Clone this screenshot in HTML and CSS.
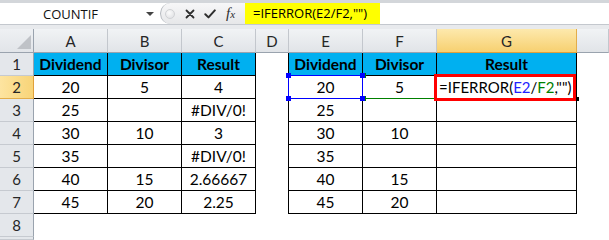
FILE: index.html
```html
<!DOCTYPE html>
<html>
<head>
<meta charset="utf-8">
<link rel="stylesheet" href="styles.css">
</head>
<body>
<div class="fbar">
  <div class="frow">
    <div class="namebox"><span class="nbtext">COUNTIF</span><span class="dd"></span></div>
    <div class="fbtns">
      <span class="knob"></span>
      <svg class="ico-x" width="10" height="10" viewBox="0 0 10 10"><path d="M1.5 1.5 L8.5 8.5 M8.5 1.5 L1.5 8.5" stroke="#2e2e2e" stroke-width="1.8" stroke-linecap="round" fill="none"/></svg>
      <svg class="ico-ok" width="12" height="10" viewBox="0 0 12 10"><path d="M1.3 5.2 L4.5 8.4 L10.8 1.4" stroke="#2e2e2e" stroke-width="2" stroke-linecap="round" stroke-linejoin="round" fill="none"/></svg>
      <span class="fx">f<span class="fxx">x</span></span>
    </div>
    <div class="finput"><span class="fy">=IFERROR(E2/F2,"")</span></div>
  </div>
</div>
<div class="sheet">
  <div class="corner"></div>
  <div class="ch">A</div><div class="ch">B</div><div class="ch">C</div><div class="ch">D</div><div class="ch">E</div><div class="ch">F</div><div class="ch on">G</div><div class="ch"></div>

  <div class="rh">1</div>
  <div class="t th">Dividend</div><div class="t th">Divisor</div><div class="t th">Result</div><div class="dr"></div>
  <div class="t th">Dividend</div><div class="t th">Divisor</div><div class="t th">Result</div><div></div>

  <div class="rh on">2</div>
  <div class="t">20</div><div class="t">5</div><div class="t">4</div><div class="dr"></div>
  <div class="t sel">20<span class="bbox"></span><span class="sq tl"></span><span class="sq tr"></span><span class="sq bl"></span><span class="sq br"></span></div>
  <div class="t sel gsel">5<span class="gsq gt"></span><span class="gsq gb"></span></div>
  <div class="t sel formula">=IFERROR(<span class="rb">E2</span>/<span class="rg">F2</span>,"")<span class="redbox"></span><span class="handle"></span></div>
  <div></div>

  <div class="rh">3</div>
  <div class="t">25</div><div class="t"></div><div class="t">#DIV/0!</div><div class="dr"></div>
  <div class="t">25</div><div class="t"></div><div class="t"></div><div></div>

  <div class="rh">4</div>
  <div class="t">30</div><div class="t">10</div><div class="t">3</div><div class="dr"></div>
  <div class="t">30</div><div class="t">10</div><div class="t"></div><div></div>

  <div class="rh">5</div>
  <div class="t">35</div><div class="t"></div><div class="t">#DIV/0!</div><div class="dr"></div>
  <div class="t">35</div><div class="t"></div><div class="t"></div><div></div>

  <div class="rh">6</div>
  <div class="t">40</div><div class="t">15</div><div class="t">2.66667</div><div class="dr"></div>
  <div class="t">40</div><div class="t">15</div><div class="t"></div><div></div>

  <div class="rh">7</div>
  <div class="t">45</div><div class="t">20</div><div class="t">2.25</div><div class="dr"></div>
  <div class="t">45</div><div class="t">20</div><div class="t"></div><div></div>

  <div class="rh">8</div>
  <div></div><div></div><div></div><div></div><div></div><div></div><div></div><div></div>

  <div class="rh"></div>
  <div></div><div></div><div></div><div></div><div></div><div></div><div></div><div></div>
</div>
</body>
</html>
```
FILE: styles.css
```css
html, body {
  margin: 0;
  padding: 0;
}
body {
  width: 609px;
  height: 240px;
  overflow: hidden;
  background: #fff;
}

/* formula bar */
.fbar {
  height: 29px;
  box-sizing: border-box;
  border-top: 3px solid #d3d6da;
  background: #e8eaed;
}
.frow {
  display: flex;
  height: 21px;
  background: #fff;
  border-bottom: 1px solid #c4c8ce;
}
.namebox {
  width: 160px;
  display: flex;
  align-items: center;
  font: 13px "Open Sans", sans-serif;
  color: #111;
}
.nbtext {
  padding-left: 43px;
}
.dd {
  margin-left: auto;
  margin-right: 6px;
  width: 0;
  height: 0;
  border-left: 4px solid transparent;
  border-right: 4px solid transparent;
  border-top: 4px solid #444;
}
.fbtns {
  width: 85px;
  box-sizing: border-box;
  display: flex;
  align-items: center;
  background: linear-gradient(#f7f7f8, #e6e7e9);
  border-left: 1px solid #b3b7bd;
  border-radius: 11px 0 0 11px;
}
.knob {
  width: 10px;
  height: 10px;
  box-sizing: border-box;
  margin-left: 4px;
  border-radius: 50%;
  border: 1px solid #d0d2d5;
  background: radial-gradient(circle at 40% 35%, #fbfbfb, #dcdde0);
}
.ico-x {
  margin-left: 10px;
}
.ico-ok {
  margin-left: 9px;
}
.fx {
  margin-left: 10px;
  font: italic 15px "Liberation Serif", serif;
  color: #2e2e2e;
  line-height: 15px;
}
.fxx {
  font-size: 11px;
}
.finput {
  flex: 1;
  display: flex;
}
.fy {
  width: 135px;
  box-sizing: border-box;
  padding-left: 8px;
  background: #ffff00;
  font: 13px "Open Sans", sans-serif;
  line-height: 21px;
  color: #000;
  white-space: nowrap;
}

/* sheet */
.sheet {
  display: grid;
  grid-template-columns: 34px 74px 74px 74px 33px 74px 74px 140px 1fr;
  grid-template-rows: 24px repeat(8, 23px) 3px;
  font: 15.5px Lato, sans-serif;
  color: #000;
}
.sheet > div {
  box-sizing: border-box;
  display: flex;
  align-items: center;
  justify-content: center;
  white-space: nowrap;
}
.corner {
  position: relative;
  background: linear-gradient(#eef0f3, #e2e5e9);
  border-right: 1px solid #9aa3ae;
  border-bottom: 1px solid #9aa3ae;
}
.corner::after {
  content: "";
  position: absolute;
  right: 2px;
  bottom: 3px;
  width: 0;
  height: 0;
  border-left: 14px solid transparent;
  border-bottom: 14px solid #bfc2c7;
}
.ch {
  background: linear-gradient(#f1f3f5, #e1e4e8);
  border-right: 1px solid #c3c7cd;
  border-bottom: 1px solid #9aa3ae;
  color: #262626;
  font-size: 15px;
}
.ch.on {
  background: linear-gradient(#fde9ad, #f7d070);
  border-right-color: #e3ad4a;
  border-bottom-color: #e0a03a;
}
.rh {
  background: #e4e7eb;
  border-right: 1px solid #9aa3ae;
  border-bottom: 1px solid #c6cad0;
  color: #262626;
  font-size: 15px;
}
.rh.on {
  background: linear-gradient(90deg, #fde4a0, #f8d478);
  border-right-color: #e0a03a;
  border-bottom-color: #e3ad4a;
}
.t {
  border-right: 1px solid #000;
  border-bottom: 1px solid #000;
}
.th {
  background: #00b0f0;
  font-weight: 700;
}
.dr {
  border-right: 1px solid #000;
}

/* selections */
.sel {
  position: relative;
}
.bbox {
  position: absolute;
  left: -1px;
  top: -1px;
  width: 75px;
  height: 24px;
  box-sizing: border-box;
  border: 1px solid #0000ff;
  z-index: 3;
}
.sq {
  position: absolute;
  width: 5px;
  height: 5px;
  background: #0000ff;
  z-index: 4;
}
.sq.tl { left: -3px; top: -3px; }
.sq.tr { left: 71px; top: -3px; }
.sq.bl { left: -3px; top: 20px; }
.sq.br { left: 71px; top: 20px; }
.gsel {
  border-bottom-color: #008000;
}
.gsq {
  position: absolute;
  width: 5px;
  height: 5px;
  background: #008000;
  z-index: 2;
}
.gsq.gt { left: -2px; top: -3px; }
.gsq.gb { left: -2px; top: 20px; }
.sheet > .formula {
  justify-content: flex-start;
  padding-left: 2px;
  font-size: 15px;
}
.rb { color: #1f1fff; }
.rg { color: #008000; }
.redbox {
  position: absolute;
  left: -3px;
  top: -2px;
  width: 142px;
  height: 27px;
  box-sizing: border-box;
  border: 3px solid #ff0000;
  z-index: 5;
}
.handle {
  position: absolute;
  left: 139px;
  top: 21px;
  width: 3px;
  height: 4px;
  background: #000;
  z-index: 6;
}
```
